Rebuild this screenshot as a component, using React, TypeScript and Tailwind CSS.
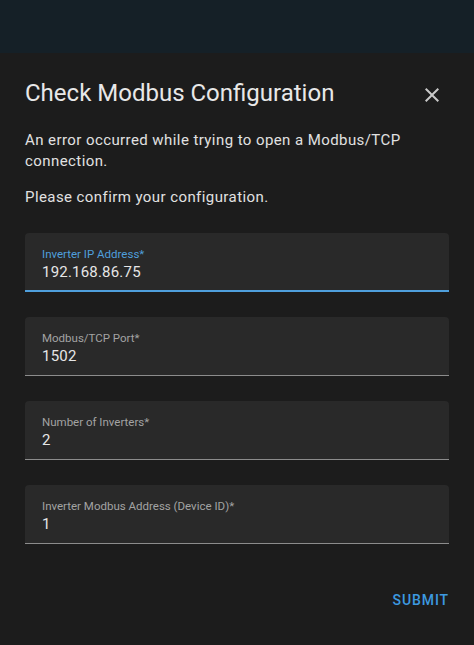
import React from 'react'

type FieldProps = {
  label: string
  value: string
  focused?: boolean
}

function Field({ label, value, focused }: FieldProps) {
  return (
    <div className="relative h-[59px] rounded-t-[4px] bg-[#292929] px-[17px] pt-[14px]">
      <div className={`text-[11.5px] leading-[14px] ${focused ? 'text-[#4f9fdc]' : 'text-[#a3a3a3]'}`}>{label}</div>
      <div className="mt-[1px] text-[15px] leading-[20px] tracking-[0.2px] text-[#e6e6e6]">{value}</div>
      <div
        className={`absolute bottom-0 left-0 right-0 ${focused ? 'h-[2px] bg-[#4f9fdc]' : 'h-px bg-[#8c8c8c]'}`}
      />
    </div>
  )
}

export default function App() {
  return (
    <div className="flex h-[645px] w-[474px] flex-col bg-[#1c1c1c] font-['Roboto',sans-serif]">
      {/* backdrop above the dialog */}
      <div className="h-[53px] bg-[#152027]" />

      <div className="flex flex-1 flex-col px-[25px] pt-[24px]">
        <div className="flex items-center justify-between">
          <h2 className="text-[24px] leading-[32px] font-normal text-[#e8e8e8]">Check Modbus Configuration</h2>
          <button aria-label="Close" className="mt-[4px] mr-[5px] text-[#c8c8c8]">
            <svg width="24" height="24" viewBox="0 0 24 24" fill="currentColor">
              <path d="M19,6.41L17.59,5L12,10.59L6.41,5L5,6.41L10.59,12L5,17.59L6.41,19L12,13.41L17.59,19L19,17.59L13.41,12L19,6.41Z" />
            </svg>
          </button>
        </div>

        <p className="mt-[21px] text-[15px] leading-[21px] tracking-[0.42px] text-[#e1e1e1]">
          An error occurred while trying to open a Modbus/TCP connection.
        </p>
        <p className="mt-[15px] text-[15px] leading-[21px] tracking-[0.42px] text-[#e1e1e1]">
          Please confirm your configuration.
        </p>

        <div className="mt-[25px] flex flex-col gap-[25px]">
          <Field label="Inverter IP Address*" value="192.168.86.75" focused />
          <Field label="Modbus/TCP Port*" value="1502" />
          <Field label="Number of Inverters*" value="2" />
          <Field label="Inverter Modbus Address (Device ID)*" value="1" />
        </div>

        <div className="mt-[48px] flex justify-end">
          <button className="text-[14px] leading-[16px] font-medium tracking-[0.9px] text-[#3d9ae0]">SUBMIT</button>
        </div>
      </div>
    </div>
  )
}
